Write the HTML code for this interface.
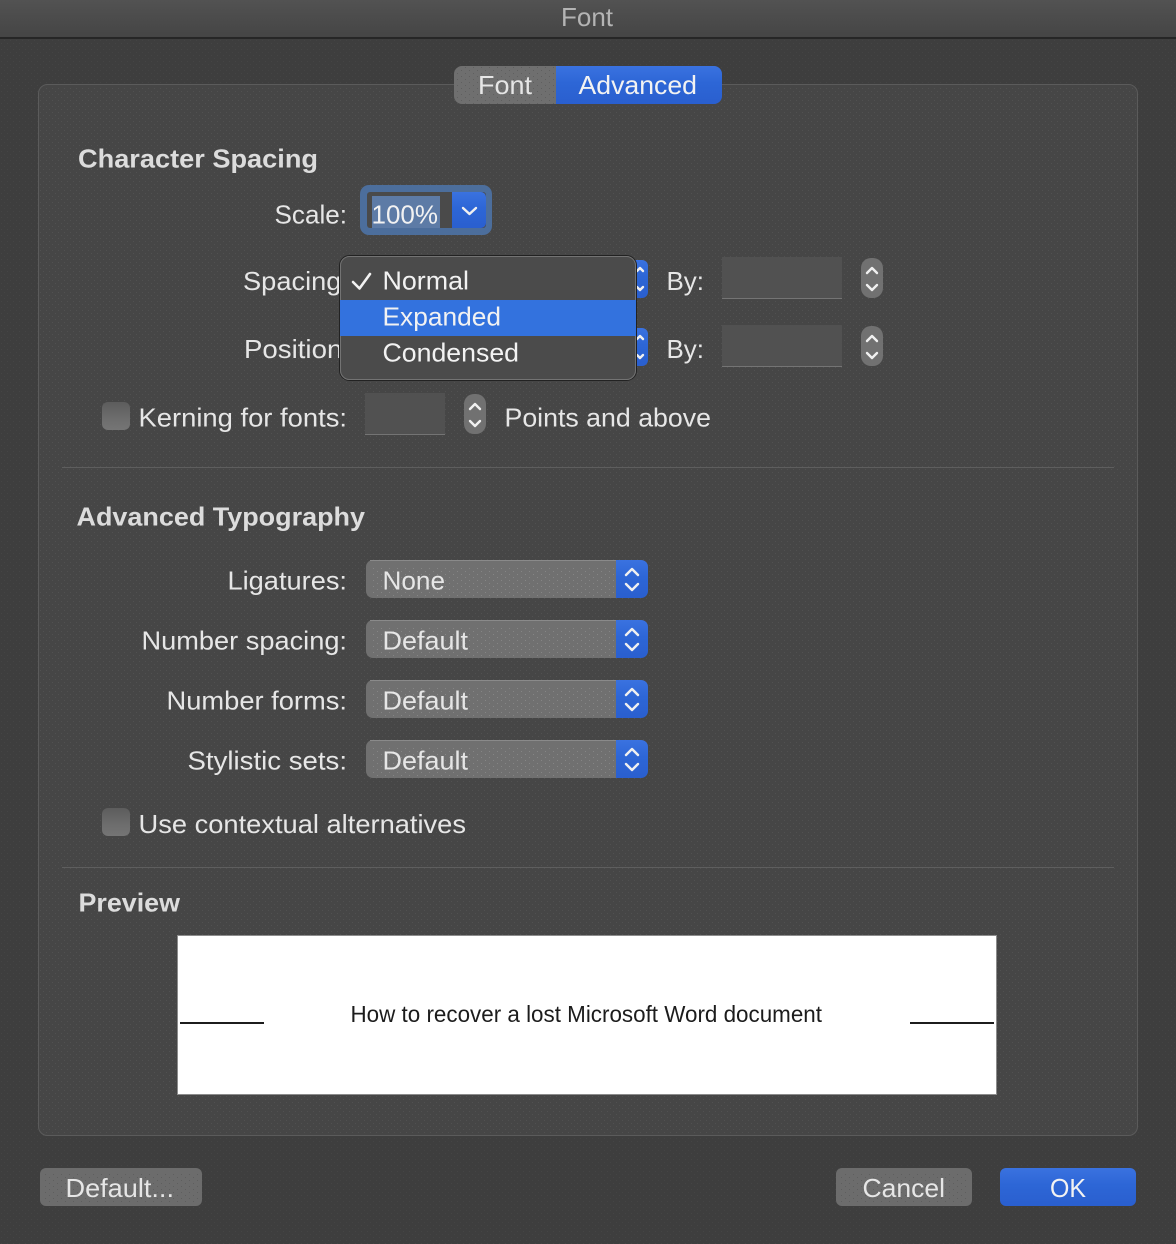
<!DOCTYPE html>
<html lang="en">
<head>
<meta charset="utf-8">
<title>Font</title>
<style>
html,body{margin:0;padding:0;background:#3e3e3e;width:1176px;height:1244px;overflow:hidden}
svg{display:block}
text{font-family:"Liberation Sans",sans-serif;font-size:26px;fill:#e6e6e6}
.b{font-weight:bold;fill:#dcdcdc}
.w{fill:#f2f2f2}
.ch{fill:none;stroke:#f0f0f0;stroke-width:2.4;stroke-linecap:round;stroke-linejoin:round}
</style>
</head>
<body>
<svg width="1176" height="1244" viewBox="0 0 1176 1244" xmlns="http://www.w3.org/2000/svg">
<defs>
<linearGradient id="tb" x1="0" y1="0" x2="0" y2="1"><stop offset="0" stop-color="#525252"/><stop offset="1" stop-color="#454545"/></linearGradient>
<linearGradient id="blue" x1="0" y1="0" x2="0" y2="1"><stop offset="0" stop-color="#3a72e0"/><stop offset=".45" stop-color="#2d66d6"/><stop offset="1" stop-color="#2a5fcf"/></linearGradient>
<linearGradient id="cb" x1="0" y1="0" x2="0" y2="1"><stop offset="0" stop-color="#5c5c5c"/><stop offset=".55" stop-color="#6c6c6c"/><stop offset="1" stop-color="#757575"/></linearGradient>
<pattern id="dots" width="6" height="6" patternUnits="userSpaceOnUse"><rect x="1" y="1" width="1" height="1" fill="#4e4e4e"/><rect x="4" y="4" width="1" height="1" fill="#4c4c4c"/></pattern>
<pattern id="dots2" width="8" height="6" patternUnits="userSpaceOnUse"><rect x="1" y="1" width="1" height="1" fill="#858585"/><rect x="5" y="4" width="1" height="1" fill="#858585"/></pattern>
<pattern id="dots3" width="6" height="6" patternUnits="userSpaceOnUse"><rect x="1" y="1" width="1" height="1" fill="#5c5c5c"/><rect x="4" y="4" width="1" height="1" fill="#5c5c5c"/></pattern>
<pattern id="dots4" width="8" height="6" patternUnits="userSpaceOnUse"><rect x="1" y="1" width="1" height="1" fill="#555"/><rect x="5" y="4" width="1" height="1" fill="#555"/></pattern>
</defs>

<rect width="1176" height="1244" fill="#3e3e3e"/>
<rect width="1176" height="1244" fill="url(#dots)" opacity=".45"/>

<!-- title bar -->
<rect width="1176" height="37" fill="url(#tb)"/>
<rect y="37" width="1176" height="2" fill="#262626"/>
<text x="561" y="26" textLength="52" lengthAdjust="spacingAndGlyphs" style="fill:#b4b4b4">Font</text>

<!-- panel -->
<rect x="38.500" y="84.500" width="1099" height="1051" rx="9" fill="#464646" stroke="#5b5b5b"/>
<rect x="40" y="86" width="1096" height="1048" rx="8" fill="url(#dots3)" opacity=".5"/>

<!-- tabs -->
<path d="M462 66H556V104H462a8 8 0 0 1-8-8V74a8 8 0 0 1 8-8z" fill="#6f6f6f"/>
<path d="M462 66H556V104H462a8 8 0 0 1-8-8V74a8 8 0 0 1 8-8z" fill="url(#dots4)" opacity=".6"/>
<path d="M556 66H714a8 8 0 0 1 8 8V96a8 8 0 0 1-8 8H556z" fill="url(#blue)"/>
<text x="478" y="94" textLength="54" lengthAdjust="spacingAndGlyphs">Font</text>
<text x="578.500" y="94" textLength="118.500" lengthAdjust="spacingAndGlyphs" class="w">Advanced</text>

<!-- Character Spacing -->
<text x="78" y="167.500" textLength="240" lengthAdjust="spacingAndGlyphs" class="b">Character Spacing</text>
<text x="274.500" y="223.500" textLength="72.500" lengthAdjust="spacingAndGlyphs">Scale:</text>
<rect x="360" y="185" width="132" height="50" rx="9" fill="#4c6e9c"/>
<rect x="367" y="192" width="119" height="36" rx="3" fill="#4a4a4a"/>
<rect x="372" y="196" width="68" height="32" fill="#5d7ba6"/>
<path d="M452 192H481a5 5 0 0 1 5 5V223a5 5 0 0 1-5 5H452z" fill="url(#blue)"/>
<path d="M463 208L469.500 214L476 208" class="ch"/>
<text x="371.500" y="223.500" textLength="66.500" lengthAdjust="spacingAndGlyphs" class="w">100%</text>

<text x="243" y="290" textLength="106" lengthAdjust="spacingAndGlyphs">Spacing:</text>
<text x="244" y="358" textLength="106" lengthAdjust="spacingAndGlyphs">Position:</text>

<rect x="600" y="260" width="48" height="38" rx="6" fill="url(#blue)"/>
<rect x="600" y="328" width="48" height="38" rx="6" fill="url(#blue)"/>
<path d="M637 271l3-3 3 3M637 287l3 3 3-3M637 339l3-3 3 3M637 355l3 3 3-3" class="ch" stroke-width="2"/>

<text x="666.500" y="290" textLength="37.500" lengthAdjust="spacingAndGlyphs">By:</text>
<text x="666.500" y="358" textLength="37.500" lengthAdjust="spacingAndGlyphs">By:</text>

<g>
<rect x="722" y="257" width="120" height="42" fill="#515151"/>
<rect x="722" y="298" width="120" height="1" fill="#747474"/>
<rect x="722" y="325" width="120" height="42" fill="#515151"/>
<rect x="722" y="366" width="120" height="1" fill="#747474"/>
<rect x="365" y="393" width="80" height="42" fill="#515151"/>
<rect x="365" y="434" width="80" height="1" fill="#747474"/>
</g>

<!-- steppers -->
<rect x="861" y="258" width="22" height="40" rx="10" fill="#717171"/>
<path d="M867 273l5-5 5 5M867 285l5 5 5-5" class="ch"/>
<rect x="861" y="326" width="22" height="40" rx="10" fill="#717171"/>
<path d="M867 341l5-5 5 5M867 353l5 5 5-5" class="ch"/>
<rect x="464" y="394" width="22" height="40" rx="10" fill="#717171"/>
<path d="M470 409l5-5 5 5M470 421l5 5 5-5" class="ch"/>

<!-- kerning -->
<rect x="102" y="402" width="28" height="28" rx="6" fill="url(#cb)"/>
<text x="138.500" y="426.500" textLength="208.500" lengthAdjust="spacingAndGlyphs">Kerning for fonts:</text>
<text x="504.500" y="426.500" textLength="206.500" lengthAdjust="spacingAndGlyphs">Points and above</text>

<rect x="62" y="467" width="1052" height="1" fill="#5e5e5e"/>

<!-- Advanced Typography -->
<text x="76.500" y="525.500" textLength="288.500" lengthAdjust="spacingAndGlyphs" class="b">Advanced Typography</text>

<text x="227.500" y="589.500" textLength="119.500" lengthAdjust="spacingAndGlyphs">Ligatures:</text>
<text x="141.500" y="649.500" textLength="205.500" lengthAdjust="spacingAndGlyphs">Number spacing:</text>
<text x="166.500" y="709.500" textLength="180.500" lengthAdjust="spacingAndGlyphs">Number forms:</text>
<text x="187.500" y="769.500" textLength="159.500" lengthAdjust="spacingAndGlyphs">Stylistic sets:</text>

<g>
<path d="M373 560H616V598H373a7 7 0 0 1-7-7V567a7 7 0 0 1 7-7z" fill="#707070"/>
<rect x="372" y="566" width="244" height="30" fill="url(#dots2)"/>
<path d="M616 560H641a7 7 0 0 1 7 7V591a7 7 0 0 1-7 7H616z" fill="url(#blue)"/>
<path d="M626 575l6-6 6 6M626 584l6 6 6-6" class="ch"/>
<rect x="370" y="560" width="246" height="1" fill="#8a8a8a"/>
<text x="382.500" y="589.500" textLength="62.500" lengthAdjust="spacingAndGlyphs">None</text>
</g>
<g>
<path d="M373 620H616V658H373a7 7 0 0 1-7-7V627a7 7 0 0 1 7-7z" fill="#707070"/>
<rect x="372" y="626" width="244" height="30" fill="url(#dots2)"/>
<path d="M616 620H641a7 7 0 0 1 7 7V651a7 7 0 0 1-7 7H616z" fill="url(#blue)"/>
<path d="M626 635l6-6 6 6M626 644l6 6 6-6" class="ch"/>
<rect x="370" y="620" width="246" height="1" fill="#8a8a8a"/>
<text x="382.500" y="649.500" textLength="85.500" lengthAdjust="spacingAndGlyphs">Default</text>
</g>
<g>
<path d="M373 680H616V718H373a7 7 0 0 1-7-7V687a7 7 0 0 1 7-7z" fill="#707070"/>
<rect x="372" y="686" width="244" height="30" fill="url(#dots2)"/>
<path d="M616 680H641a7 7 0 0 1 7 7V711a7 7 0 0 1-7 7H616z" fill="url(#blue)"/>
<path d="M626 695l6-6 6 6M626 704l6 6 6-6" class="ch"/>
<rect x="370" y="680" width="246" height="1" fill="#8a8a8a"/>
<text x="382.500" y="709.500" textLength="85.500" lengthAdjust="spacingAndGlyphs">Default</text>
</g>
<g>
<path d="M373 740H616V778H373a7 7 0 0 1-7-7V747a7 7 0 0 1 7-7z" fill="#707070"/>
<rect x="372" y="746" width="244" height="30" fill="url(#dots2)"/>
<path d="M616 740H641a7 7 0 0 1 7 7V771a7 7 0 0 1-7 7H616z" fill="url(#blue)"/>
<path d="M626 755l6-6 6 6M626 764l6 6 6-6" class="ch"/>
<rect x="370" y="740" width="246" height="1" fill="#8a8a8a"/>
<text x="382.500" y="769.500" textLength="85.500" lengthAdjust="spacingAndGlyphs">Default</text>
</g>

<rect x="102" y="808" width="28" height="28" rx="6" fill="url(#cb)"/>
<text x="138.500" y="833" textLength="327.500" lengthAdjust="spacingAndGlyphs">Use contextual alternatives</text>

<rect x="62" y="867" width="1052" height="1" fill="#5e5e5e"/>

<!-- Preview -->
<text x="78.500" y="911.500" textLength="101.500" lengthAdjust="spacingAndGlyphs" class="b">Preview</text>
<rect x="177.500" y="935.500" width="819" height="159" fill="#fff" stroke="#8c8c8c"/>
<rect x="180" y="1022" width="84" height="2" fill="#1c1c1c"/>
<rect x="910" y="1022" width="84" height="2" fill="#1c1c1c"/>
<text x="350.500" y="1022" textLength="471.500" lengthAdjust="spacingAndGlyphs" style="fill:#1c1c1c;font-size:23px">How to recover a lost Microsoft Word document</text>

<!-- buttons -->
<rect x="40" y="1168" width="162" height="38" rx="6" fill="#6c6c6c"/>
<rect x="44" y="1172" width="154" height="32" fill="url(#dots4)" opacity=".6"/>
<text x="65.500" y="1197" textLength="108.500" lengthAdjust="spacingAndGlyphs">Default...</text>
<rect x="836" y="1168" width="136" height="38" rx="6" fill="#6c6c6c"/>
<rect x="840" y="1172" width="128" height="32" fill="url(#dots4)" opacity=".6"/>
<text x="862.500" y="1197" textLength="82.500" lengthAdjust="spacingAndGlyphs">Cancel</text>
<rect x="1000" y="1168" width="136" height="38" rx="6" fill="url(#blue)"/>
<text x="1050" y="1197" textLength="36" lengthAdjust="spacingAndGlyphs" class="w">OK</text>

<!-- dropdown menu -->
<rect x="339.500" y="255.500" width="297" height="125" rx="10" fill="#4b4b4b" stroke="#222"/>
<rect x="340.500" y="256.500" width="295" height="123" rx="9" fill="none" stroke="#737373"/>
<rect x="340" y="300" width="296" height="36" fill="#3372de"/>
<path d="M353 282L359.500 288.500L370 274" fill="none" stroke="#f2f2f2" stroke-width="2.600" stroke-linecap="round" stroke-linejoin="round"/>
<text x="382.500" y="289.500" textLength="86.500" lengthAdjust="spacingAndGlyphs" class="w">Normal</text>
<text x="382.500" y="325.500" textLength="118.500" lengthAdjust="spacingAndGlyphs" class="w">Expanded</text>
<text x="382.500" y="361.500" textLength="136.500" lengthAdjust="spacingAndGlyphs" class="w">Condensed</text>
</svg>
</body>
</html>
